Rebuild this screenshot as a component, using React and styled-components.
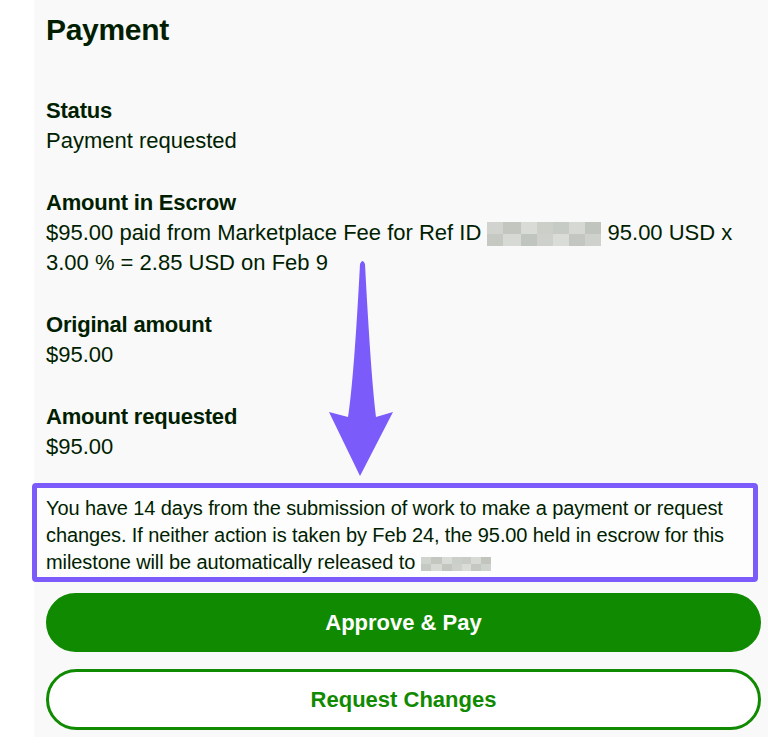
import React from "react"
import styled, { createGlobalStyle } from "styled-components"

const GlobalStyle = createGlobalStyle`
  html, body {
    margin: 0;
    padding: 0;
    background: #ffffff;
  }
  * {
    box-sizing: border-box;
  }
`

const Page = styled.div`
  position: relative;
  padding-left: 34px;
  height: 737px;
  overflow: hidden;
  font-family: "Liberation Sans", Arial, sans-serif;
  color: #001e00;
`

const Panel = styled.div`
  background: #f9f9f9;
  height: 100%;
  padding: 10px 7px 0 12px;
`

const Heading = styled.h2`
  margin: 0 0 46px;
  font-size: 30px;
  line-height: 40px;
  font-weight: 700;
  letter-spacing: -0.3px;
`

const Section = styled.div`
  margin-bottom: ${p => p.$last ? "21px" : "32px"};
  font-size: 22px;
  line-height: 30px;
`

const Label = styled.div`
  font-weight: 700;
  letter-spacing: -0.2px;
`

const Value = styled.div`
  font-weight: 400;
`

// pixelated blur standing in for the redacted names
const Redacted = styled.span`
  display: inline-block;
  vertical-align: middle;
  width: ${p => p.$w}px;
  height: ${p => p.$h}px;
  background-image:
    linear-gradient(90deg, #c9cdc7 0 14%, #b9beb6 14% 30%, #d3d6d1 30% 44%, #c3c8c0 44% 58%, #bfc4bc 58% 72%, #d0d3cd 72% 86%, #b7bcb4 86% 100%),
    linear-gradient(90deg, #bcc1b9 0 14%, #d1d4ce 14% 30%, #b8bdb5 30% 44%, #c6cac3 44% 58%, #d4d7d2 58% 72%, #bbbfb8 72% 86%, #c8ccc5 86% 100%);
  background-size: 100% 50%, 100% 50%;
  background-position: 0 0, 0 100%;
  background-repeat: no-repeat;
  opacity: 0.85;
`

const Notice = styled.div`
  margin: 0 3px 11px -14px;
  border: 5px solid #7b5cfa;
  border-radius: 4px;
  background: #fdfdfd;
  padding: 7px 9px 1px;
  font-size: 20px;
  line-height: 27px;
  color: #001e00;
  letter-spacing: -0.1px;
`

const Button = styled.button`
  display: flex;
  align-items: center;
  justify-content: center;
  width: 100%;
  height: ${p => p.$outline ? "61px" : "59px"};
  margin-bottom: ${p => p.$outline ? "0" : "17px"};
  border-radius: 40px;
  border: 3px solid #108a00;
  background: ${p => p.$outline ? "#ffffff" : "#108a00"};
  color: ${p => p.$outline ? "#108a00" : "#ffffff"};
  font-family: "Liberation Sans", Arial, sans-serif;
  font-size: 22px;
  font-weight: 700;
  cursor: pointer;
`

const Arrow = styled.svg`
  position: absolute;
  left: 327px;
  top: 258px;
  pointer-events: none;
`

export default function App() {
  return (
    <>
      <GlobalStyle />
      <Page>
        <Panel>
          <Heading>Payment</Heading>
          <Section>
            <Label>Status</Label>
            <Value>Payment requested</Value>
          </Section>
          <Section>
            <Label>Amount in Escrow</Label>
            <Value>
              $95.00 paid from Marketplace Fee for Ref ID <Redacted $w={114} $h={24} /> 95.00 USD x 3.00 % = 2.85 USD on Feb 9
            </Value>
          </Section>
          <Section>
            <Label>Original amount</Label>
            <Value>$95.00</Value>
          </Section>
          <Section $last>
            <Label>Amount requested</Label>
            <Value>$95.00</Value>
          </Section>
          <Notice>
            You have 14 days from the submission of work to make a payment or request changes. If neither action is taken by Feb 24, the 95.00 held in escrow for this milestone will be automatically released to <Redacted $w={70} $h={14} />
          </Notice>
          <Button>Approve &amp; Pay</Button>
          <Button $outline>Request Changes</Button>
        </Panel>
        <Arrow width="70" height="222" viewBox="0 0 70 222">
          <path
            d="M33 6 Q35.5 0 38 6 Q44 120 49 159 L66 154 L33 218 L2 154 L21 159 Q27 120 33 6 Z"
            fill="#7b5cfa"
          />
        </Arrow>
      </Page>
    </>
  )
}
